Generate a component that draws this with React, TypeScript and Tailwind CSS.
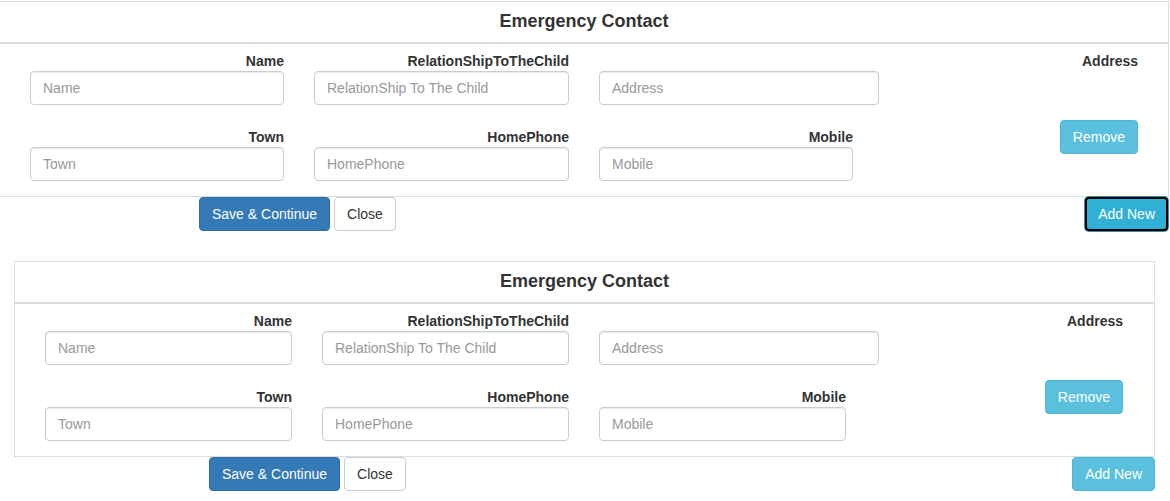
import React from 'react';

type Layout = {
  panel: string;
  body: string;
  field: string;
  rel: string;
  mobile: string;
  actions: string;
  focused: boolean;
};

const layouts: Layout[] = [
  {
    panel: 'mt-px -ml-px w-[1170px]',
    body: 'pl-[30px] pr-[30px]',
    field: 'w-[254px]',
    rel: 'w-[255px]',
    mobile: 'w-[254px]',
    actions: 'w-[1169px] pl-[199px]',
    focused: true,
  },
  {
    panel: 'mt-[30px] ml-[14px] w-[1141px]',
    body: 'pl-[30px] pr-[31px]',
    field: 'w-[247px]',
    rel: 'w-[247px]',
    mobile: 'w-[247px]',
    actions: 'ml-[14px] w-[1141px] pl-[195px]',
    focused: false,
  },
];

const Field: React.FC<{ label: string; placeholder: string; className: string; inputClass?: string }> = ({
  label,
  placeholder,
  className,
  inputClass = 'w-full',
}) => (
  <div className={className}>
    <label className="block h-5 text-right text-[14px] font-bold leading-5 text-[#333]">{label}</label>
    <input
      type="text"
      placeholder={placeholder}
      className={`block h-[34px] rounded-[4px] border border-[#ccc] bg-white px-3 text-[14px] text-[#555] shadow-[inset_0_1px_1px_rgba(0,0,0,0.075)] outline-none placeholder:text-[#999] ${inputClass}`}
    />
  </div>
);

const ContactPanel: React.FC<{ layout: Layout }> = ({ layout }) => (
  <>
    <div className={`border border-[#ddd] bg-white ${layout.panel}`}>
      <div className="flex h-[42px] items-center justify-center border-b-2 border-[#ddd] pb-[2px] text-[18px] font-bold text-[#333]">
        Emergency Contact
      </div>
      <div className={`pt-[7px] pb-[15px] ${layout.body}`}>
        <div className="flex gap-[30px]">
          <Field label="Name" placeholder="Name" className={layout.field} />
          <Field label="RelationShipToTheChild" placeholder="RelationShip To The Child" className={layout.rel} />
          <Field label="Address" placeholder="Address" className="flex-1" inputClass="w-[280px]" />
        </div>
        <div className="mt-[15px] flex items-start gap-[30px]">
          <Field label="Town" placeholder="Town" className={`pt-[7px] ${layout.field}`} />
          <Field label="HomePhone" placeholder="HomePhone" className={`pt-[7px] ${layout.rel}`} />
          <Field label="Mobile" placeholder="Mobile" className={`pt-[7px] ${layout.mobile}`} />
          <button className="ml-auto h-[34px] rounded-[4px] border border-[#46b8da] bg-[#5bc0de] px-3 text-[14px] leading-5 text-white">
            Remove
          </button>
        </div>
      </div>
    </div>
    <div className={`flex items-start gap-1 ${layout.actions}`}>
      <button className="h-[34px] rounded-[4px] border border-[#2e6da4] bg-[#337ab7] px-3 text-[14px] leading-5 text-white">
        Save &amp; Continue
      </button>
      <button className="h-[34px] rounded-[4px] border border-[#ccc] bg-white px-3 text-[14px] leading-5 text-[#333]">
        Close
      </button>
      {layout.focused ? (
        <button className="ml-auto mr-px h-[34px] rounded-[4px] border-2 border-black bg-[#31b0d5] px-[11px] text-[14px] leading-5 text-white ring-1 ring-[#3c8ea6]">
          Add New
        </button>
      ) : (
        <button className="ml-auto h-[34px] rounded-[4px] border border-[#46b8da] bg-[#5bc0de] px-3 text-[14px] leading-5 text-white">
          Add New
        </button>
      )}
    </div>
  </>
);

export default function App() {
  return (
    <div className="h-[501px] w-[1170px] overflow-hidden bg-white font-['Liberation_Sans',Arial,sans-serif]">
      {layouts.map((l, i) => (
        <ContactPanel key={i} layout={l} />
      ))}
    </div>
  );
}
